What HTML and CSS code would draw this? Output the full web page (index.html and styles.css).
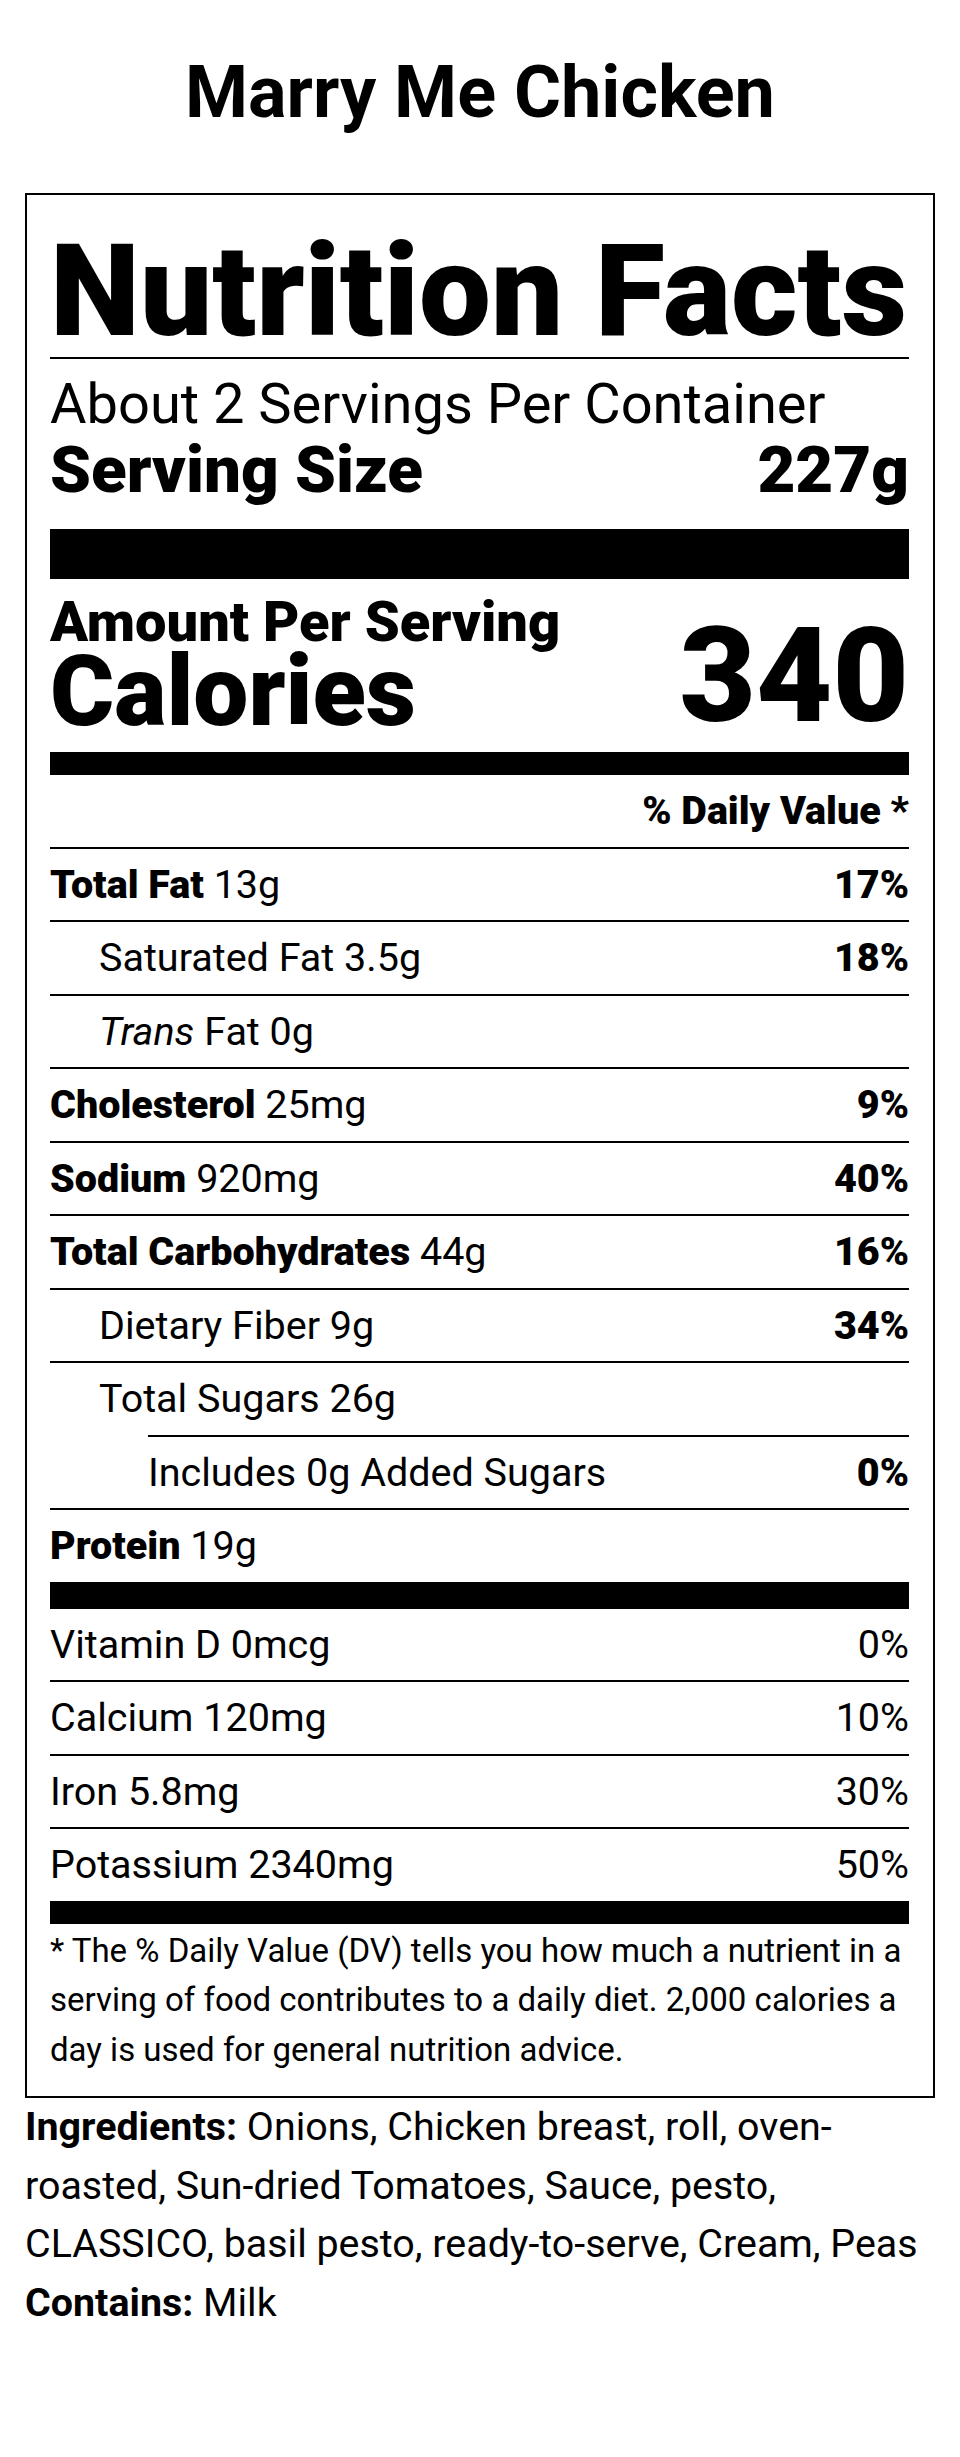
FILE: index.html
```html
<!DOCTYPE html>
<html lang="en">
<head>
<meta charset="utf-8">
<title>Marry Me Chicken – Nutrition Facts</title>
<link rel="stylesheet" href="styles.css">
</head>
<body>
<main class="page">
  <h1 class="title">Marry Me Chicken</h1>
  <section class="label">
    <h2 class="nf">Nutrition Facts</h2>
    <p class="servings">About 2 Servings Per Container</p>
    <div class="serving-size"><span>Serving Size</span><span>227g</span></div>
    <div class="bar bar-lg"></div>
    <div class="calories">
      <div class="cal-left">
        <div class="amount">Amount Per Serving</div>
        <div class="cal-label">Calories</div>
      </div>
      <div class="cal-value">340</div>
    </div>
    <div class="bar bar-md"></div>
    <div class="row dv-head"><b>% Daily Value *</b></div>
    <div class="row line"><span><b>Total Fat</b> 13g</span><b>17%</b></div>
    <div class="row line sub"><span>Saturated Fat 3.5g</span><b>18%</b></div>
    <div class="row line sub"><span><i>Trans</i> Fat 0g</span></div>
    <div class="row line"><span><b>Cholesterol</b> 25mg</span><b>9%</b></div>
    <div class="row line"><span><b>Sodium</b> 920mg</span><b>40%</b></div>
    <div class="row line"><span><b>Total Carbohydrates</b> 44g</span><b>16%</b></div>
    <div class="row line sub"><span>Dietary Fiber 9g</span><b>34%</b></div>
    <div class="row line sub"><span>Total Sugars 26g</span></div>
    <div class="row line sub2"><span>Includes 0g Added Sugars</span><b>0%</b></div>
    <div class="row line"><span><b>Protein</b> 19g</span></div>
    <div class="bar bar-protein"></div>
    <div class="row"><span>Vitamin D 0mcg</span><span>0%</span></div>
    <div class="row line"><span>Calcium 120mg</span><span>10%</span></div>
    <div class="row line"><span>Iron 5.8mg</span><span>30%</span></div>
    <div class="row line"><span>Potassium 2340mg</span><span>50%</span></div>
    <div class="bar bar-md"></div>
    <p class="footnote">* The % Daily Value (DV) tells you how much a nutrient in a serving of food contributes to a daily diet. 2,000 calories a day is used for general nutrition advice.</p>
  </section>
  <p class="ingredients"><b>Ingredients:</b> Onions, Chicken breast, roll, oven-roasted, Sun-dried Tomatoes, Sauce, pesto, CLASSICO, basil pesto, ready-to-serve, Cream, Peas</p>
  <p class="contains"><b>Contains:</b> Milk</p>
</main>
</body>
</html>
```

FILE: styles.css
```css
* { box-sizing: border-box; }

body {
  margin: 0;
  background: #fff;
  color: #000;
  font-family: Roboto, "Liberation Sans", Arial, sans-serif;
}

.page {
  width: 910px;
  margin: 0 auto;
  padding-top: 50px;
}

.title {
  margin: 0;
  text-align: center;
  font-size: 72px;
  line-height: 1.2;
  font-weight: 700;
}

.label {
  margin-top: 57px;
  border: 2px solid #000;
  padding: 24px 24px 22px 23px;
}

.nf {
  margin: 9px 0 0;
  font-size: 128px;
  line-height: 127px;
  font-weight: 900;
  padding-bottom: 2px;
  border-bottom: 2px solid #000;
  white-space: nowrap;
}

.servings {
  margin: 13px 0 0;
  font-size: 56px;
  line-height: 64.8px;
  font-weight: 400;
  white-space: nowrap;
}

.serving-size {
  display: flex;
  justify-content: space-between;
  font-size: 65.5px;
  line-height: 66px;
  font-weight: 900;
}

.bar { background: #000; }
.bar-lg { height: 50px; margin-top: 26px; }
.bar-md { height: 23px; }
.bar-protein { height: 27px; }

.calories {
  display: flex;
  justify-content: space-between;
  align-items: flex-end;
  margin-top: 16px;
  margin-bottom: 17px;
  font-weight: 900;
}

.amount {
  font-size: 56px;
  line-height: 54px;
  white-space: nowrap;
}

.cal-label {
  font-size: 98px;
  line-height: 86px;
}

.cal-value {
  font-size: 132px;
  line-height: 118px;
}

.row {
  display: flex;
  justify-content: space-between;
  font-size: 39.5px;
  line-height: 71.5px;
  white-space: nowrap;
}

.row b { font-weight: 900; }

.row.line { border-top: 2px solid #000; }
.row.sub { padding-left: 49px; }
.row.sub2 { margin-left: 98px; }
.dv-head { justify-content: flex-end; }

.footnote {
  margin: 2px 0 0;
  font-size: 33px;
  line-height: 49.5px;
}

.ingredients,
.contains {
  margin: 0;
  font-size: 39.4px;
  line-height: 58.5px;
}

.ingredients b,
.contains b { font-weight: 700; }
```
